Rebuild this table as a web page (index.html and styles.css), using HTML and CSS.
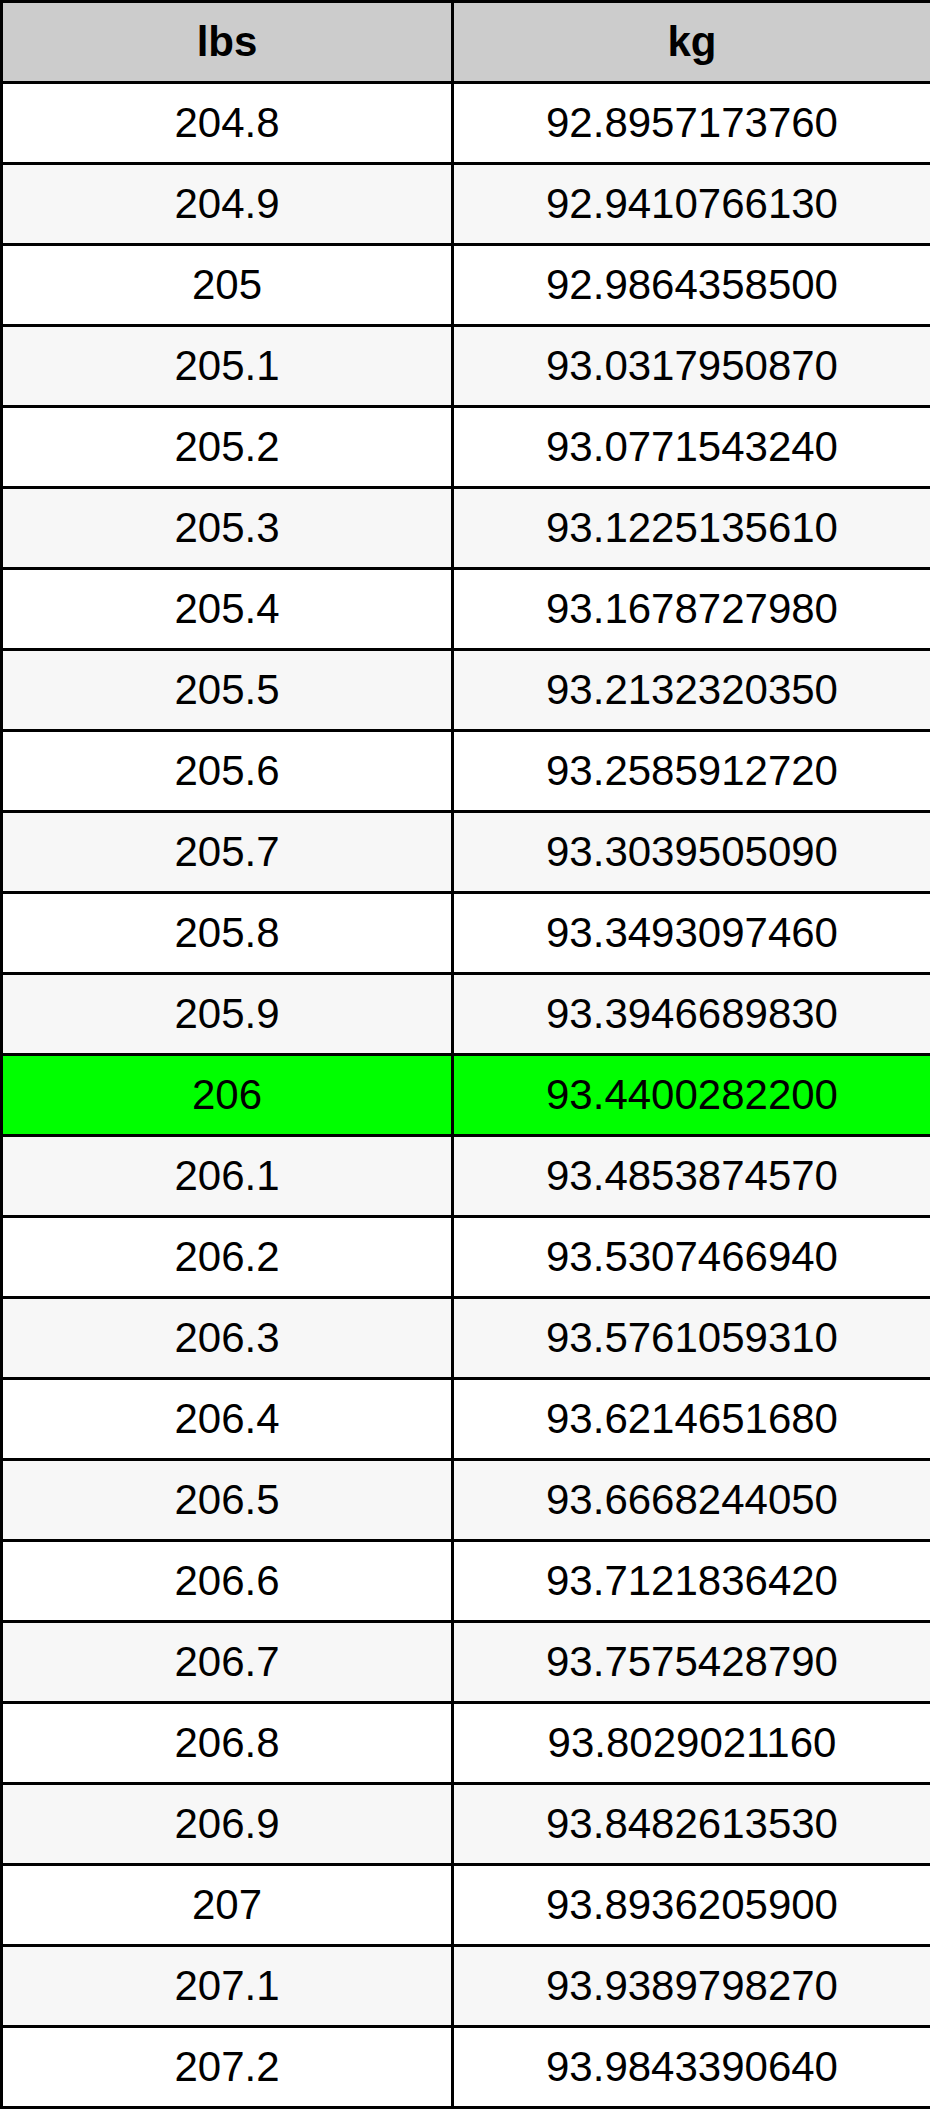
FILE: index.html
```html
<!DOCTYPE html>
<html>
<head>
<meta charset="utf-8">
<link rel="stylesheet" href="styles.css">
</head>
<body>
<table class="conv">
<colgroup><col class="c1"><col class="c2"></colgroup>
<thead>
<tr><th>lbs</th><th>kg</th></tr>
</thead>
<tbody>
<tr><td>204.8</td><td>92.8957173760</td></tr>
<tr class="alt"><td>204.9</td><td>92.9410766130</td></tr>
<tr><td>205</td><td>92.9864358500</td></tr>
<tr class="alt"><td>205.1</td><td>93.0317950870</td></tr>
<tr><td>205.2</td><td>93.0771543240</td></tr>
<tr class="alt"><td>205.3</td><td>93.1225135610</td></tr>
<tr><td>205.4</td><td>93.1678727980</td></tr>
<tr class="alt"><td>205.5</td><td>93.2132320350</td></tr>
<tr><td>205.6</td><td>93.2585912720</td></tr>
<tr class="alt"><td>205.7</td><td>93.3039505090</td></tr>
<tr><td>205.8</td><td>93.3493097460</td></tr>
<tr class="alt"><td>205.9</td><td>93.3946689830</td></tr>
<tr class="hl"><td>206</td><td>93.4400282200</td></tr>
<tr class="alt"><td>206.1</td><td>93.4853874570</td></tr>
<tr><td>206.2</td><td>93.5307466940</td></tr>
<tr class="alt"><td>206.3</td><td>93.5761059310</td></tr>
<tr><td>206.4</td><td>93.6214651680</td></tr>
<tr class="alt"><td>206.5</td><td>93.6668244050</td></tr>
<tr><td>206.6</td><td>93.7121836420</td></tr>
<tr class="alt"><td>206.7</td><td>93.7575428790</td></tr>
<tr><td>206.8</td><td>93.8029021160</td></tr>
<tr class="alt"><td>206.9</td><td>93.8482613530</td></tr>
<tr><td>207</td><td>93.8936205900</td></tr>
<tr class="alt"><td>207.1</td><td>93.9389798270</td></tr>
<tr><td>207.2</td><td>93.9843390640</td></tr>
</tbody>
</table>
</body>
</html>
```
FILE: styles.css
```css
html, body {
  margin: 0;
  padding: 0;
  background: #ffffff;
}
.conv {
  width: 930px;
  border-collapse: collapse;
  table-layout: fixed;
  font-family: "Liberation Sans", Arial, Helvetica, sans-serif;
  font-size: 42px;
  color: #000;
}
.c1 { width: 451px; }
.c2 { width: 479px; }
.conv th, .conv td {
  border: 3px solid #000;
  height: 78px;
  padding: 0;
  text-align: center;
  vertical-align: middle;
  line-height: 1;
}
.conv th {
  background: #cccccc;
  font-weight: bold;
}
.conv td { background: #ffffff; }
.conv tr.alt td { background: #f7f7f7; }
.conv tr.hl td { background: #00ff00; }
```
